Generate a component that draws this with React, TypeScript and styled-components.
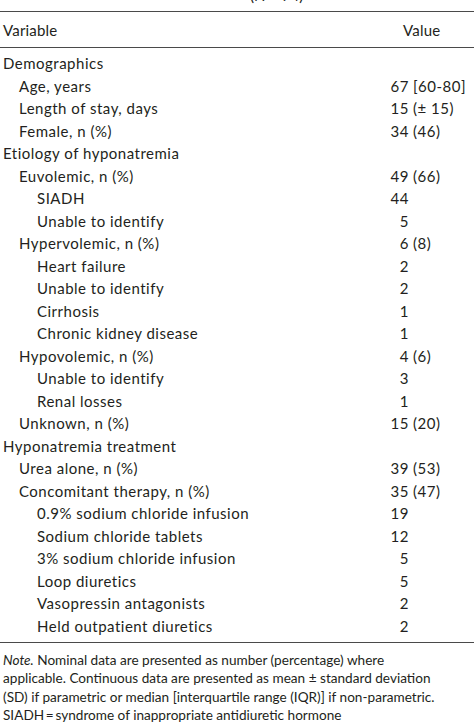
import React from 'react';
import styled, { createGlobalStyle } from 'styled-components';

const GlobalStyle = createGlobalStyle`
  html, body {
    margin: 0;
    padding: 0;
    background: #fff;
  }
  body {
    font-family: Lato, "Open Sans", sans-serif;
    color: #231f20;
  }
`;

interface RowData {
  label: string;
  level: number;
  lead?: string;
  tail?: string;
}

const rows: RowData[] = [
  { label: 'Demographics', level: 0 },
  { label: 'Age, years', level: 1, lead: '67', tail: '[60-80]' },
  { label: 'Length of stay, days', level: 1, lead: '15', tail: '(\u00b1 15)' },
  { label: 'Female, n (%)', level: 1, lead: '34', tail: '(46)' },
  { label: 'Etiology of hyponatremia', level: 0 },
  { label: 'Euvolemic, n (%)', level: 1, lead: '49', tail: '(66)' },
  { label: 'SIADH', level: 2, lead: '44' },
  { label: 'Unable to identify', level: 2, lead: '5' },
  { label: 'Hypervolemic, n (%)', level: 1, lead: '6', tail: '(8)' },
  { label: 'Heart failure', level: 2, lead: '2' },
  { label: 'Unable to identify', level: 2, lead: '2' },
  { label: 'Cirrhosis', level: 2, lead: '1' },
  { label: 'Chronic kidney disease', level: 2, lead: '1' },
  { label: 'Hypovolemic, n (%)', level: 1, lead: '4', tail: '(6)' },
  { label: 'Unable to identify', level: 2, lead: '3' },
  { label: 'Renal losses', level: 2, lead: '1' },
  { label: 'Unknown, n (%)', level: 1, lead: '15', tail: '(20)' },
  { label: 'Hyponatremia treatment', level: 0 },
  { label: 'Urea alone, n (%)', level: 1, lead: '39', tail: '(53)' },
  { label: 'Concomitant therapy, n (%)', level: 1, lead: '35', tail: '(47)' },
  { label: '0.9% sodium chloride infusion', level: 2, lead: '19' },
  { label: 'Sodium chloride tablets', level: 2, lead: '12' },
  { label: '3% sodium chloride infusion', level: 2, lead: '5' },
  { label: 'Loop diuretics', level: 2, lead: '5' },
  { label: 'Vasopressin antagonists', level: 2, lead: '2' },
  { label: 'Held outpatient diuretics', level: 2, lead: '2' },
];

const indent = [3, 19, 37];

const App: React.FC = () => {
  return (
    <Page>
      <GlobalStyle />
      <Caption>
        <CaptionText>(N = 74)</CaptionText>
      </Caption>
      <Table>
        <HeaderRow>
          <Label level={0}>Variable</Label>
          <HeaderValue>Value</HeaderValue>
        </HeaderRow>
        <Body>
          {rows.map((r, i) => (
            <Row key={i}>
              <Label level={r.level}>{r.label}</Label>
              <ValueCell>
                <Lead>{r.lead}</Lead>
                <Tail>{r.tail}</Tail>
              </ValueCell>
            </Row>
          ))}
        </Body>
      </Table>
      <Note>
        <NoteLine>
          <em>Note.</em> Nominal data are presented as number (percentage) where
        </NoteLine>
        <NoteLine>applicable. Continuous data are presented as mean {'\u00b1'} standard deviation</NoteLine>
        <NoteLine>(SD) if parametric or median [interquartile range (IQR)] if non-parametric.</NoteLine>
        <NoteLine>SIADH{'\u2009'}={'\u2009'}syndrome of inappropriate antidiuretic hormone</NoteLine>
      </Note>
    </Page>
  );
};

const Page = styled.div`
  width: 474px;
  height: 727px;
  overflow: hidden;
`;

const Caption = styled.div`
  height: 11px;
  overflow: hidden;
  padding-left: 250px;
`;

const CaptionText = styled.div`
  font-size: 15px;
  line-height: 18px;
  margin-top: -14px;
`;

const Table = styled.div`
  border-top: 1px solid #4a4a4a;
  border-bottom: 1px solid #4a4a4a;
`;

const HeaderRow = styled.div`
  display: flex;
  align-items: center;
  height: 35px;
  border-bottom: 1px solid #4a4a4a;
  font-size: 15px;
  letter-spacing: 0.2px;
`;

const Body = styled.div`
  padding: 4px 0 5px;
`;

const Row = styled.div`
  display: flex;
  align-items: center;
  height: 22.5px;
  font-size: 15px;
  letter-spacing: 0.5px;
`;

const Label = styled.div<{ level: number }>`
  flex: 1;
  padding-left: ${(p) => indent[p.level]}px;
  white-space: nowrap;
`;

const HeaderValue = styled.div`
  width: 109px;
  padding-left: 38px;
  box-sizing: border-box;
`;

const ValueCell = styled.div`
  width: 109px;
  display: grid;
  grid-template-columns: 44px 1fr;
  white-space: nowrap;
`;

const Lead = styled.span`
  text-align: right;
`;

const Tail = styled.span`
  padding-left: 4px;
`;

const Note = styled.div`
  padding: 7.5px 0 0 3px;
  font-size: 13.6px;
  line-height: 18.5px;
`;

const NoteLine = styled.div`
  white-space: nowrap;
`;

export default App;
